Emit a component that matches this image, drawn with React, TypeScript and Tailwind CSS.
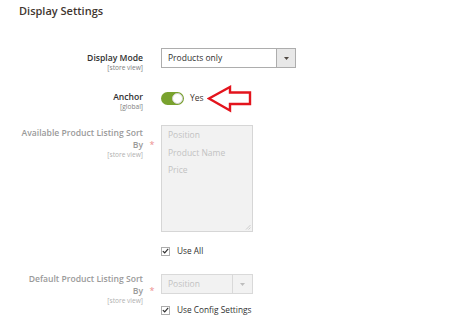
import React from "react";

const font = { fontFamily: '"Open Sans", "Noto Sans", Arial, sans-serif' };

function Label({
  lines,
  scope,
  disabled,
  required,
}: {
  lines: string[];
  scope: string;
  disabled?: boolean;
  required?: boolean;
}) {
  return (
    <div className="flex">
      <div className="w-[143px] text-right">
        {lines.map((l, i) => (
          <div
            key={i}
            className={`text-[8.6px] leading-[12px] font-semibold ${disabled ? "text-[#9a9a9a]" : "text-[#303030]"}`}
          >
            {l}
          </div>
        ))}
        <div className={`text-[6.6px] leading-[8px] ${disabled ? "text-[#b0b0b0]" : "text-[#808080]"}`}>{scope}</div>
      </div>
      <div className="w-[18px] flex justify-center">
        {required && (
          <span
            className="text-[9px] text-[#ec8d8d] leading-[12px]"
            style={{ marginTop: lines.length > 1 ? 12 : 0 }}
          >
            *
          </span>
        )}
      </div>
    </div>
  );
}

function Check({ label }: { label: string }) {
  return (
    <div className="flex items-center gap-[7px]">
      <div className="w-[9px] h-[9px] border border-[#adadad] bg-white flex items-center justify-center">
        <svg width="7" height="6" viewBox="0 0 7 6">
          <path d="M0.8 3.1 L2.7 4.8 L6.2 0.9" fill="none" stroke="#303030" strokeWidth="1.2" />
        </svg>
      </div>
      <span className="text-[8.3px] leading-[10px] text-[#303030]">{label}</span>
    </div>
  );
}

export default function App() {
  return (
    <div className="w-[474px] h-[324px] bg-white overflow-hidden" style={font}>
      <div className="pl-[19px] pt-[3px] text-[11px] leading-[15px] font-semibold text-[#41362f]">Display Settings</div>

      {/* Display Mode */}
      <div className="grid grid-cols-[161px_auto] mt-[30px]">
        <div className="pt-[4px]">
          <Label lines={["Display Mode"]} scope="[store view]" />
        </div>
        <div className="w-[135px] h-[20px] border border-[#adadad] flex">
          <div className="flex-1 pl-[6px] text-[8.5px] leading-[18px] text-[#303030]">Products only</div>
          <div className="w-[19px] border-l border-[#adadad] bg-[#e8e8e8] flex items-center justify-center">
            <svg width="5" height="3" viewBox="0 0 5 3">
              <path d="M0 0 L5 0 L2.5 3 Z" fill="#514943" />
            </svg>
          </div>
        </div>
      </div>

      {/* Anchor */}
      <div className="grid grid-cols-[161px_auto] mt-[19px]">
        <Label lines={["Anchor"]} scope="[global]" />
        <div className="flex items-start h-[20px]">
          <div className="mt-[1px] w-[23px] h-[13px] rounded-full bg-[#79a22e] flex items-center justify-end pr-[1px]">
            <div className="w-[11px] h-[11px] rounded-full bg-white border border-[#d0d0d0]" />
          </div>
          <span className="ml-[6px] text-[8.5px] leading-[14px] text-[#41362f]">Yes</span>
          <svg className="ml-[3px] -mt-[6px]" width="46" height="28" viewBox="0 0 46 28">
            <path
              d="M2 13.5 L23 2 L23 7.5 L43 7.5 L43 19 L23 19 L23 25.5 Z"
              fill="none"
              stroke="#e3141d"
              strokeWidth="2.4"
              strokeLinejoin="miter"
            />
          </svg>
        </div>
      </div>

      {/* Available Product Listing Sort By */}
      <div className="grid grid-cols-[161px_auto] mt-[14px]">
        <div className="pt-[2px]">
          <Label lines={["Available Product Listing Sort", "By"]} scope="[store view]" disabled required />
        </div>
        <div>
          <div className="relative w-[92px] h-[107px] border border-[#d6d6d6] bg-[#f2f2f2]">
            {["Position", "Product Name", "Price"].map((t) => (
              <div key={t} className="pl-[6px] text-[8.5px] leading-[17.5px] text-[#c2c2c2]">
                {t}
              </div>
            ))}
            <svg className="absolute right-[1px] bottom-[1px]" width="6" height="6" viewBox="0 0 6 6">
              <path d="M5.5 1 L1 5.5 M5.5 3.5 L3.5 5.5" stroke="#c4c4c4" strokeWidth="0.8" />
            </svg>
          </div>
          <div className="mt-[14px]">
            <Check label="Use All" />
          </div>
        </div>
      </div>

      {/* Default Product Listing Sort By */}
      <div className="grid grid-cols-[161px_auto] mt-[17px]">
        <Label lines={["Default Product Listing Sort", "By"]} scope="[store view]" disabled required />
        <div>
          <div className="mt-[1px] w-[92px] h-[20px] border border-[#d9d9d9] bg-[#f2f2f2] flex">
            <div className="flex-1 pl-[6px] text-[8.5px] leading-[18px] text-[#c2c2c2]">Position</div>
            <div className="w-[20px] border-l border-[#d9d9d9] flex items-center justify-center">
              <svg width="5" height="3" viewBox="0 0 5 3">
                <path d="M0 0 L5 0 L2.5 3 Z" fill="#bdbdbd" />
              </svg>
            </div>
          </div>
          <div className="mt-[11px]">
            <Check label="Use Config Settings" />
          </div>
        </div>
      </div>
    </div>
  );
}
